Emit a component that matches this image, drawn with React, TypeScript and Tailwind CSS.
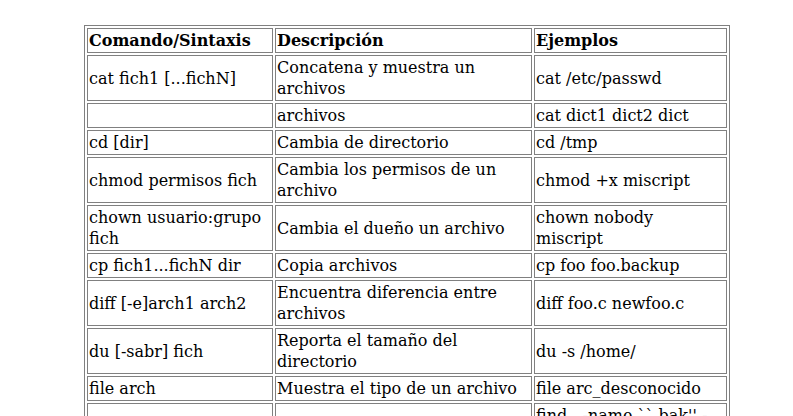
import React from "react";

const rows: [string, string, string][] = [
  ["cat fich1 [...fichN]", "Concatena y muestra un archivos", "cat /etc/passwd"],
  ["", "archivos", "cat dict1 dict2 dict"],
  ["cd [dir]", "Cambia de directorio", "cd /tmp"],
  ["chmod permisos fich", "Cambia los permisos de un archivo", "chmod +x miscript"],
  ["chown usuario:grupo fich", "Cambia el dueño un archivo", "chown nobody miscript"],
  ["cp fich1...fichN dir", "Copia archivos", "cp foo foo.backup"],
  ["diff [-e]arch1 arch2", "Encuentra diferencia entre archivos", "diff foo.c newfoo.c"],
  ["du [-sabr] fich", "Reporta el tamaño del directorio", "du -s /home/"],
  ["file arch", "Muestra el tipo de un archivo", "file arc_desconocido"],
  ["find dir test acción", "Encuentra archivos.", "find . -name ``.bak'' -print"],
];

export default function App() {
  const td = "border border-[#808080] px-[1px] py-[1px] align-middle text-left";
  return (
    <div className="min-h-[416px] w-[793px] bg-white pl-[84px] pt-[25px] text-black [font-family:'DejaVu_Serif',serif] text-[16px] leading-[21px]">
      <table className="w-[646px] table-fixed border-separate border-spacing-[2px] border border-[#808080]">
        <colgroup>
          <col className="w-[186px]" />
          <col className="w-[257px]" />
          <col className="w-[193px]" />
        </colgroup>
        <thead>
          <tr>
            <th className={td + " font-bold"}>Comando/Sintaxis</th>
            <th className={td + " font-bold"}>Descripción</th>
            <th className={td + " font-bold"}>Ejemplos</th>
          </tr>
        </thead>
        <tbody>
          {rows.map((r, i) => (
            <tr key={i}>
              <td className={td}>{r[0]}</td>
              <td className={td}>{r[1]}</td>
              <td className={td}>{r[2]}</td>
            </tr>
          ))}
        </tbody>
      </table>
    </div>
  );
}
